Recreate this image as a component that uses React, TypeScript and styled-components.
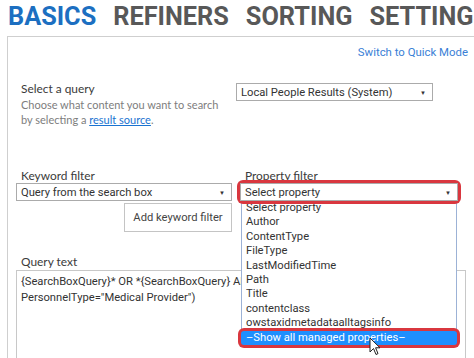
import styled, { createGlobalStyle } from "styled-components";

const GlobalStyle = createGlobalStyle`
  html, body {
    margin: 0;
    padding: 0;
    background: #ffffff;
    overflow: hidden;
  }
  body {
    width: 474px;
    height: 358px;
    font-family: Roboto, "Liberation Sans", sans-serif;
  }
`;

const properties: string[] = [
  "Select property",
  "Author",
  "ContentType",
  "FileType",
  "LastModifiedTime",
  "Path",
  "Title",
  "contentclass",
  "owstaxidmetadataalltagsinfo",
];

const Page = styled.div`
  width: 474px;
  height: 358px;
  overflow: hidden;
  position: relative;
`;

const Tabs = styled.div`
  display: flex;
  gap: 17px;
  padding: 2px 0 0 8px;
  height: 34px;
  white-space: nowrap;
`;

const Tab = styled.div<{ $active?: boolean }>`
  font-family: Roboto, sans-serif;
  font-weight: 700;
  font-size: 25.3px;
  line-height: 30px;
  color: ${(p) => (p.$active ? "#1c6fc1" : "#585858")};
`;

const Panel = styled.div`
  margin-left: 7px;
  border-left: 1px solid #cfcfcf;
  border-top: 1px solid #cfcfcf;
  padding: 0 0 0 8px;
  height: 400px;
`;

const LinkRow = styled.div`
  display: flex;
  justify-content: flex-end;
  padding: 8px 6px 0 0;
  height: 20px;
`;

const QuickLink = styled.a`
  font-size: 11.4px;
  color: #3a80d6;
  text-decoration: none;
`;

const Row = styled.div`
  display: grid;
  grid-template-columns: 216px 218px;
  column-gap: 8px;
`;

const QueryRow = styled(Row)`
  margin-top: 17px;
  height: 87px;
`;

const Label = styled.div`
  font-family: Lato, "Open Sans", sans-serif;
  font-size: 11.9px;
  line-height: 14px;
  color: #3b3b3b;
  padding-left: 5px;
`;

const Hint = styled.div`
  font-family: Lato, "Open Sans", sans-serif;
  font-size: 11px;
  line-height: 15px;
  color: #7d7d7d;
  padding-left: 5px;
  margin-top: 1px;
  white-space: nowrap;
`;

const HintLink = styled.a`
  color: #1a73d1;
  text-decoration: underline;
`;

const Select = styled.div<{ $width?: number; $shift?: number }>`
  display: flex;
  align-items: center;
  justify-content: space-between;
  box-sizing: border-box;
  height: 18px;
  width: ${(p) => (p.$width ? `${p.$width}px` : "100%")};
  margin-left: ${(p) => p.$shift ?? 0}px;
  border: 1px solid #ababab;
  background: #ffffff;
  padding: 0 6px 0 4px;
  font-size: 11.2px;
  color: #333333;
  white-space: nowrap;
`;

const Arrow = styled.span`
  font-size: 6px;
  color: #333333;
`;

const FilterRow = styled(Row)`
  height: 86px;
`;

const Column = styled.div`
  position: relative;
  display: flex;
  flex-direction: column;
`;

const QueryColumn = styled(Column)`
  padding-top: 1px;
`;

const RightAligned = styled.div`
  display: flex;
  justify-content: flex-end;
  margin-top: 2px;
`;

const Button = styled.div`
  box-sizing: border-box;
  width: 108px;
  height: 29px;
  display: flex;
  align-items: center;
  justify-content: center;
  border: 1px solid #c4c4c4;
  font-size: 11.2px;
  color: #444444;
`;

const Highlight = styled.div`
  position: relative;
  border-radius: 3px;
  box-shadow: 0 0 0 3px #d9373f;
  z-index: 3;
`;

const DropList = styled.div`
  position: absolute;
  top: 32px;
  left: 1px;
  width: 216px;
  box-sizing: border-box;
  border: 1px solid #9cb2d6;
  border-top: none;
  background: #ffffff;
  z-index: 2;
`;

const Option = styled.div<{ $selected?: boolean }>`
  height: 14.4px;
  line-height: 14.4px;
  padding-left: 4px;
  font-size: 11.2px;
  color: ${(p) => (p.$selected ? "#ffffff" : "#333333")};
  background: ${(p) => (p.$selected ? "#1e8fff" : "transparent")};
  white-space: nowrap;
`;

const SelectedOption = styled(Option)`
  border-radius: 3px;
  box-shadow: 0 0 0 3px #d9373f;
  margin: 0 -1px;
  padding-left: 5px;
`;

const TextArea = styled.div`
  margin-top: 1px;
  width: 450px;
  height: 120px;
  box-sizing: border-box;
  border: 1px solid #c8c8c8;
  padding: 3px 4px;
  font-size: 11.2px;
  line-height: 16px;
  color: #333333;
  white-space: nowrap;
  overflow: hidden;
`;

const Cursor = styled.svg`
  position: absolute;
  left: 369px;
  top: 337px;
  z-index: 5;
`;

const App = () => {
  return (
    <Page>
      <GlobalStyle />
      <Tabs>
        <Tab $active>BASICS</Tab>
        <Tab>REFINERS</Tab>
        <Tab>SORTING</Tab>
        <Tab>SETTINGS</Tab>
      </Tabs>
      <Panel>
        <LinkRow>
          <QuickLink href="#">Switch to Quick Mode</QuickLink>
        </LinkRow>
        <QueryRow>
          <Column>
            <Label>Select a query</Label>
            <Hint>
              Choose what content you want to search
              <br />
              by selecting a <HintLink href="#">result source</HintLink>.
            </Hint>
          </Column>
          <QueryColumn>
            <Select $width={197} $shift={-4}>
              Local People Results (System)
              <Arrow>▼</Arrow>
            </Select>
          </QueryColumn>
        </QueryRow>
        <FilterRow>
          <Column>
            <Label>Keyword filter</Label>
            <Select>
              Query from the search box
              <Arrow>▼</Arrow>
            </Select>
            <RightAligned>
              <Button>Add keyword filter</Button>
            </RightAligned>
          </Column>
          <Column>
            <Label>Property filter</Label>
            <Highlight>
              <Select>
                Select property
                <Arrow>▼</Arrow>
              </Select>
            </Highlight>
            <DropList>
              {properties.map((p) => (
                <Option key={p}>{p}</Option>
              ))}
              <SelectedOption $selected>–Show all managed properties–</SelectedOption>
            </DropList>
          </Column>
        </FilterRow>
        <div>
          <Label>Query text</Label>
          <TextArea>
            {'{SearchBoxQuery}* OR *{SearchBoxQuery} AND (PersonnelType="Physician" OR'}
            <br />
            {'PersonnelType="Medical Provider")'}
          </TextArea>
        </div>
      </Panel>
      <Cursor width="12" height="19" viewBox="0 0 12 19">
        <path
          d="M1 1 L1 15 L4.5 11.5 L7 17.5 L9 16.6 L6.6 10.8 L11 10.8 Z"
          fill="#ffffff"
          stroke="#222222"
          strokeWidth="1"
          strokeLinejoin="round"
        />
      </Cursor>
    </Page>
  );
};

export default App;
